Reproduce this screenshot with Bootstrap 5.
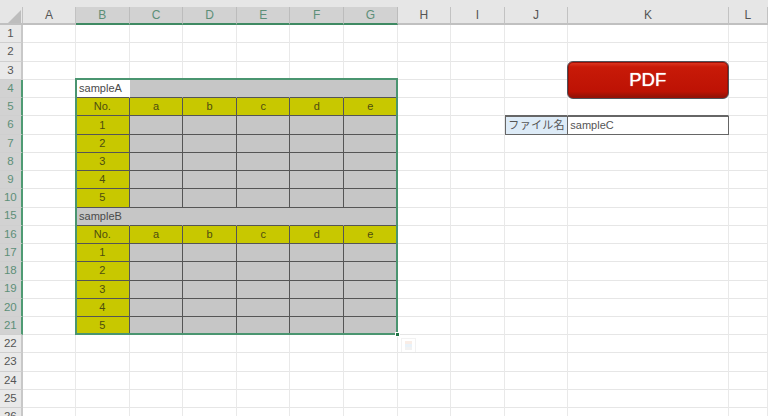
<!DOCTYPE html>
<html lang="ja">
<head>
<meta charset="utf-8">
<title>Sheet</title>
<link rel="stylesheet" href="https://cdn.jsdelivr.net/npm/bootstrap@5.3.0/dist/css/bootstrap.min.css">
<style>
html,body{height:100%;overflow:hidden;background:#fff}
.sheet-wrap{width:768px;height:416px;overflow:hidden}
.sheet{table-layout:fixed;border-collapse:separate;border-spacing:0;width:768px;font:11px/1 "Liberation Sans","Noto Sans CJK JP",sans-serif;color:#4a4a4a}
.sheet tr{height:18.24px}
.sheet tr.strip{height:7px}
.sheet td,.sheet th{padding:0;border-right:1px solid #e9e9e9;border-bottom:1px solid #e6e6e6;font-weight:400;white-space:nowrap;overflow:hidden;vertical-align:middle}
.sheet .strip td{background:#e6e6e6;border:0}
.sheet th{background:#e6e6e6;text-align:center;color:#555;font-size:12px;border-right-color:#c2c2c2;border-bottom-color:#c2c2c2}
.sheet tbody th{background:#e9e9e9;border-right:2px solid #c8c8c8;border-bottom-color:#cfcfcf;font-size:11.5px}
.sheet thead th{border-bottom:2px solid #c0c0c0}
.sheet thead th.sel{background:#d2d2d2;color:#5d8f78;border-bottom:2px solid #3f8a63;border-right-color:#bcbcbc}
.sheet tbody th.sel{background:#d2d2d2;color:#5d8f78;border-right:2px solid #4f9a73}
.sheet td.ye{background:#c8c800;text-align:center;color:#4d4d10;border-right:1px solid #555;border-bottom:1px solid #555}
.sheet td.gy{background:#c6c6c6;border-right:1px solid #555;border-bottom:1px solid #555}
.sheet td.gb{background:#c6c6c6;border-right-color:#c6c6c6;border-bottom-color:#555}
.sheet td.gt{color:#4a4a4a;padding-left:3px;border-right-color:#c6c6c6;background:#c6c6c6;border-bottom-color:#555}
.sheet td.wt{background:#fff;padding-left:3px;border-right-color:#fff;border-bottom-color:#555}
.sheet td.lb{background:#ddebf7;border:1px solid #666;border-left:1px solid #666;text-align:center;letter-spacing:.3px;color:#555}
.sheet td.vl{padding-left:2px;border:1px solid #666;border-left:0;color:#555}
.sheet td.up{border-bottom:1px solid #666}
.corner-tri{width:13px;height:13px;display:block;margin:3px 1px 0 auto}
.selection-box{left:75px;top:78px;width:323px;height:257px;border:2px solid #4a9570;pointer-events:none}
.fill-handle{right:-4px;bottom:-4px;width:5px;height:5px;background:#217346;border:1px solid #fff}
.pdf-btn{left:567px;top:61px;width:161.5px;height:37.5px;border-radius:6px;border:1px solid #4e535c;background:linear-gradient(#e03a24 0,#c81a08 14%,#bd1204 82%,#8a1208 100%);box-shadow:inset 0 0 0 1px #9c1006;color:#fff;font:18.5px/1 "Liberation Sans",sans-serif;text-shadow:0 0 1px #fff;padding:0}
.pdf-btn:hover{background:#bd1204;color:#fff}
.quick-icon{left:401px;top:338px;width:15px;height:15px;opacity:.45}
</style>
</head>
<body class="m-0">
<div class="sheet-wrap position-relative">
<table class="sheet m-0">
<colgroup><col style="width:22.7px"><col style="width:53.4px"><col style="width:53.6px"><col style="width:53.6px"><col style="width:53.6px"><col style="width:53.6px"><col style="width:53.6px"><col style="width:53.6px"><col style="width:53.6px"><col style="width:53.6px"><col style="width:63.5px"><col style="width:160.6px"><col></colgroup>
<thead>
<tr class="strip"><td colspan="13"></td></tr>
<tr><th><svg class="corner-tri" viewBox="0 0 13 13"><path d="M13 0V13H0Z" fill="#bdbdbd"/></svg></th><th>A</th><th class="sel">B</th><th class="sel">C</th><th class="sel">D</th><th class="sel">E</th><th class="sel">F</th><th class="sel">G</th><th>H</th><th>I</th><th>J</th><th>K</th><th>L</th></tr>
</thead>
<tbody>
<tr><th>1</th><td></td><td></td><td></td><td></td><td></td><td></td><td></td><td></td><td></td><td></td><td></td><td></td></tr>
<tr><th>2</th><td></td><td></td><td></td><td></td><td></td><td></td><td></td><td></td><td></td><td></td><td></td><td></td></tr>
<tr><th>3</th><td></td><td></td><td></td><td></td><td></td><td></td><td></td><td></td><td></td><td></td><td></td><td></td></tr>
<tr><th class="sel">4</th><td></td><td class="wt">sampleA</td><td class="gb"></td><td class="gb"></td><td class="gb"></td><td class="gb"></td><td class="gb"></td><td></td><td></td><td></td><td></td><td></td></tr>
<tr><th class="sel">5</th><td></td><td class="ye">No.</td><td class="ye">a</td><td class="ye">b</td><td class="ye">c</td><td class="ye">d</td><td class="ye">e</td><td></td><td></td><td class="up"></td><td class="up"></td><td></td></tr>
<tr><th class="sel">6</th><td></td><td class="ye">1</td><td class="gy"></td><td class="gy"></td><td class="gy"></td><td class="gy"></td><td class="gy"></td><td></td><td></td><td class="lb">ファイル名</td><td class="vl">sampleC</td><td></td></tr>
<tr><th class="sel">7</th><td></td><td class="ye">2</td><td class="gy"></td><td class="gy"></td><td class="gy"></td><td class="gy"></td><td class="gy"></td><td></td><td></td><td></td><td></td><td></td></tr>
<tr><th class="sel">8</th><td></td><td class="ye">3</td><td class="gy"></td><td class="gy"></td><td class="gy"></td><td class="gy"></td><td class="gy"></td><td></td><td></td><td></td><td></td><td></td></tr>
<tr><th class="sel">9</th><td></td><td class="ye">4</td><td class="gy"></td><td class="gy"></td><td class="gy"></td><td class="gy"></td><td class="gy"></td><td></td><td></td><td></td><td></td><td></td></tr>
<tr><th class="sel">10</th><td></td><td class="ye">5</td><td class="gy"></td><td class="gy"></td><td class="gy"></td><td class="gy"></td><td class="gy"></td><td></td><td></td><td></td><td></td><td></td></tr>
<tr><th class="sel">15</th><td></td><td class="gt">sampleB</td><td class="gb"></td><td class="gb"></td><td class="gb"></td><td class="gb"></td><td class="gb"></td><td></td><td></td><td></td><td></td><td></td></tr>
<tr><th class="sel">16</th><td></td><td class="ye">No.</td><td class="ye">a</td><td class="ye">b</td><td class="ye">c</td><td class="ye">d</td><td class="ye">e</td><td></td><td></td><td></td><td></td><td></td></tr>
<tr><th class="sel">17</th><td></td><td class="ye">1</td><td class="gy"></td><td class="gy"></td><td class="gy"></td><td class="gy"></td><td class="gy"></td><td></td><td></td><td></td><td></td><td></td></tr>
<tr><th class="sel">18</th><td></td><td class="ye">2</td><td class="gy"></td><td class="gy"></td><td class="gy"></td><td class="gy"></td><td class="gy"></td><td></td><td></td><td></td><td></td><td></td></tr>
<tr><th class="sel">19</th><td></td><td class="ye">3</td><td class="gy"></td><td class="gy"></td><td class="gy"></td><td class="gy"></td><td class="gy"></td><td></td><td></td><td></td><td></td><td></td></tr>
<tr><th class="sel">20</th><td></td><td class="ye">4</td><td class="gy"></td><td class="gy"></td><td class="gy"></td><td class="gy"></td><td class="gy"></td><td></td><td></td><td></td><td></td><td></td></tr>
<tr><th class="sel">21</th><td></td><td class="ye">5</td><td class="gy"></td><td class="gy"></td><td class="gy"></td><td class="gy"></td><td class="gy"></td><td></td><td></td><td></td><td></td><td></td></tr>
<tr><th>22</th><td></td><td></td><td></td><td></td><td></td><td></td><td></td><td></td><td></td><td></td><td></td><td></td></tr>
<tr><th>23</th><td></td><td></td><td></td><td></td><td></td><td></td><td></td><td></td><td></td><td></td><td></td><td></td></tr>
<tr><th>24</th><td></td><td></td><td></td><td></td><td></td><td></td><td></td><td></td><td></td><td></td><td></td><td></td></tr>
<tr><th>25</th><td></td><td></td><td></td><td></td><td></td><td></td><td></td><td></td><td></td><td></td><td></td><td></td></tr>
<tr><th>26</th><td></td><td></td><td></td><td></td><td></td><td></td><td></td><td></td><td></td><td></td><td></td><td></td></tr>
</tbody>
</table>
<div class="selection-box position-absolute"><span class="fill-handle position-absolute"></span></div>
<button type="button" class="btn pdf-btn position-absolute">PDF</button>
<svg class="quick-icon position-absolute" viewBox="0 0 15 15"><rect x=".5" y=".5" width="14" height="14" fill="#fff" stroke="#e4e4e4"/><rect x="4" y="3" width="7" height="3" fill="#f3d9c8"/><rect x="4" y="6" width="7" height="3" fill="#cfe3f2"/><rect x="4" y="9" width="7" height="3" fill="#e4e4e4"/></svg>
</div>
</body>
</html>
